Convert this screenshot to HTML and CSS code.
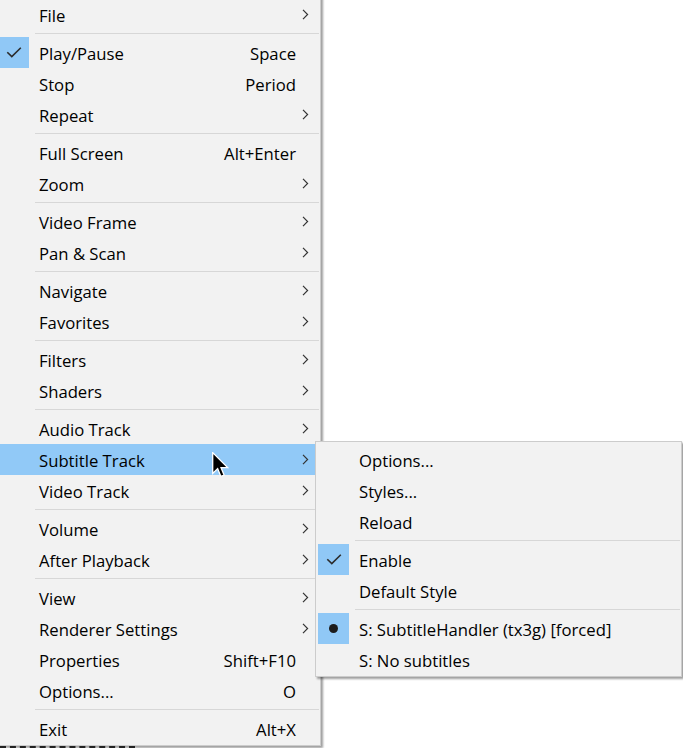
FILE: index.html
```html
<!DOCTYPE html>
<html>
<head>
<meta charset="utf-8">
<link rel="stylesheet" href="styles.css">
</head>
<body>
<div class="screen">
  <div class="menu main">
    <div class="item"><span class="gutter"></span><span class="label">File</span><span class="key"></span><span class="arrow"><svg width="7" height="11" viewBox="0 0 7 11"><polyline points="1,0.8 5.6,5.5 1,10.2"/></svg></span></div>
    <div class="sep"></div>
    <div class="item"><span class="gutter on"><svg class="check" width="16" height="11" viewBox="0 0 16 11"><polyline points="1.3,5.2 5.8,9.6 14.8,0.8"/></svg></span><span class="label">Play/Pause</span><span class="key">Space</span><span class="arrow"></span></div>
    <div class="item"><span class="gutter"></span><span class="label">Stop</span><span class="key">Period</span><span class="arrow"></span></div>
    <div class="item"><span class="gutter"></span><span class="label">Repeat</span><span class="key"></span><span class="arrow"><svg width="7" height="11" viewBox="0 0 7 11"><polyline points="1,0.8 5.6,5.5 1,10.2"/></svg></span></div>
    <div class="sep"></div>
    <div class="item"><span class="gutter"></span><span class="label">Full Screen</span><span class="key">Alt+Enter</span><span class="arrow"></span></div>
    <div class="item"><span class="gutter"></span><span class="label">Zoom</span><span class="key"></span><span class="arrow"><svg width="7" height="11" viewBox="0 0 7 11"><polyline points="1,0.8 5.6,5.5 1,10.2"/></svg></span></div>
    <div class="sep"></div>
    <div class="item"><span class="gutter"></span><span class="label">Video Frame</span><span class="key"></span><span class="arrow"><svg width="7" height="11" viewBox="0 0 7 11"><polyline points="1,0.8 5.6,5.5 1,10.2"/></svg></span></div>
    <div class="item"><span class="gutter"></span><span class="label">Pan &amp; Scan</span><span class="key"></span><span class="arrow"><svg width="7" height="11" viewBox="0 0 7 11"><polyline points="1,0.8 5.6,5.5 1,10.2"/></svg></span></div>
    <div class="sep"></div>
    <div class="item"><span class="gutter"></span><span class="label">Navigate</span><span class="key"></span><span class="arrow"><svg width="7" height="11" viewBox="0 0 7 11"><polyline points="1,0.8 5.6,5.5 1,10.2"/></svg></span></div>
    <div class="item"><span class="gutter"></span><span class="label">Favorites</span><span class="key"></span><span class="arrow"><svg width="7" height="11" viewBox="0 0 7 11"><polyline points="1,0.8 5.6,5.5 1,10.2"/></svg></span></div>
    <div class="sep"></div>
    <div class="item"><span class="gutter"></span><span class="label">Filters</span><span class="key"></span><span class="arrow"><svg width="7" height="11" viewBox="0 0 7 11"><polyline points="1,0.8 5.6,5.5 1,10.2"/></svg></span></div>
    <div class="item"><span class="gutter"></span><span class="label">Shaders</span><span class="key"></span><span class="arrow"><svg width="7" height="11" viewBox="0 0 7 11"><polyline points="1,0.8 5.6,5.5 1,10.2"/></svg></span></div>
    <div class="sep"></div>
    <div class="item"><span class="gutter"></span><span class="label">Audio Track</span><span class="key"></span><span class="arrow"><svg width="7" height="11" viewBox="0 0 7 11"><polyline points="1,0.8 5.6,5.5 1,10.2"/></svg></span></div>
    <div class="item hot"><span class="gutter"></span><span class="label">Subtitle Track</span><span class="key"></span><span class="arrow"><svg width="7" height="11" viewBox="0 0 7 11"><polyline points="1,0.8 5.6,5.5 1,10.2"/></svg></span></div>
    <div class="item"><span class="gutter"></span><span class="label">Video Track</span><span class="key"></span><span class="arrow"><svg width="7" height="11" viewBox="0 0 7 11"><polyline points="1,0.8 5.6,5.5 1,10.2"/></svg></span></div>
    <div class="sep"></div>
    <div class="item"><span class="gutter"></span><span class="label">Volume</span><span class="key"></span><span class="arrow"><svg width="7" height="11" viewBox="0 0 7 11"><polyline points="1,0.8 5.6,5.5 1,10.2"/></svg></span></div>
    <div class="item"><span class="gutter"></span><span class="label">After Playback</span><span class="key"></span><span class="arrow"><svg width="7" height="11" viewBox="0 0 7 11"><polyline points="1,0.8 5.6,5.5 1,10.2"/></svg></span></div>
    <div class="sep"></div>
    <div class="item"><span class="gutter"></span><span class="label">View</span><span class="key"></span><span class="arrow"><svg width="7" height="11" viewBox="0 0 7 11"><polyline points="1,0.8 5.6,5.5 1,10.2"/></svg></span></div>
    <div class="item"><span class="gutter"></span><span class="label">Renderer Settings</span><span class="key"></span><span class="arrow"><svg width="7" height="11" viewBox="0 0 7 11"><polyline points="1,0.8 5.6,5.5 1,10.2"/></svg></span></div>
    <div class="item"><span class="gutter"></span><span class="label">Properties</span><span class="key">Shift+F10</span><span class="arrow"></span></div>
    <div class="item"><span class="gutter"></span><span class="label">Options...</span><span class="key">O</span><span class="arrow"></span></div>
    <div class="sep"></div>
    <div class="item"><span class="gutter"></span><span class="label">Exit</span><span class="key">Alt+X</span><span class="arrow"></span></div>
  </div>
  <div class="taskbits"></div>

  <div class="menu sub">
    <div class="item"><span class="gutter"></span><span class="label">Options...</span></div>
    <div class="item"><span class="gutter"></span><span class="label">Styles...</span></div>
    <div class="item"><span class="gutter"></span><span class="label">Reload</span></div>
    <div class="sep"></div>
    <div class="item"><span class="gutter on"><svg class="check" width="16" height="11" viewBox="0 0 16 11"><polyline points="1.3,5.2 5.8,9.6 14.8,0.8"/></svg></span><span class="label">Enable</span></div>
    <div class="item"><span class="gutter"></span><span class="label">Default Style</span></div>
    <div class="sep"></div>
    <div class="item"><span class="gutter on"><span class="bullet"></span></span><span class="label">S: SubtitleHandler (tx3g) [forced]</span></div>
    <div class="item"><span class="gutter"></span><span class="label">S: No subtitles</span></div>
  </div>

  <svg class="cursor" width="17" height="26" viewBox="0 0 13 20">
    <path d="M0.5 0.5 V16.5 L4.3 12.8 L6.8 18.8 L9.3 17.8 L6.9 12 H12 Z"/>
  </svg>
</div>
</body>
</html>
```

FILE: styles.css
```css
html, body {
  margin: 0;
  padding: 0;
  background: #ffffff;
  overflow: hidden;
}

.screen {
  position: relative;
  width: 683px;
  height: 748px;
  overflow: hidden;
  font-family: "Open Sans", "Noto Sans", "DejaVu Sans", sans-serif;
  font-size: 16.7px;
  color: #000;
}

.menu {
  background: #f2f2f2;
  border: 1px solid #cccccc;
  box-shadow: 2px 2px 2px rgba(0, 0, 0, 0.38);
  padding: 2px 2px 1px 2px;
}

.main {
  width: 320px;
  margin-top: -4px;
  margin-left: -5px;
}

.sub {
  position: absolute;
  left: 315px;
  top: 441px;
  width: 361px;
}

.item {
  display: flex;
  align-items: center;
  height: 31px;
  white-space: nowrap;
}

.item.hot {
  background: #91c9f7;
}

.gutter {
  width: 31px;
  align-self: stretch;
  display: flex;
  align-items: center;
  justify-content: center;
  flex: none;
}

.gutter.on {
  background: #90c8f6;
}

.check polyline {
  fill: none;
  stroke: #2b2b2b;
  stroke-width: 1.6;
}

.bullet {
  width: 9px;
  height: 9px;
  border-radius: 50%;
  background: #1c1c1c;
}

.label {
  margin-left: 10px;
  flex: 1;
  padding-top: 3px;
  line-height: 28px;
}

.key {
  flex: none;
  padding-top: 3px;
  line-height: 28px;
}

.arrow {
  width: 16px;
  padding-left: 6px;
  flex: none;
  display: flex;
  align-items: center;
}

.arrow polyline {
  fill: none;
  stroke: #333333;
  stroke-width: 1.2;
}

.sep {
  height: 7px;
  display: flex;
  align-items: center;
  margin-left: 37px;
  margin-right: -1px;
}

.sep::before {
  content: "";
  display: block;
  width: 100%;
  height: 1px;
  background: #d7d7d7;
}

.taskbits {
  width: 135px;
  height: 0;
  border-top: 2px dashed #222;
}

.cursor {
  position: absolute;
  left: 212px;
  top: 452px;
}

.cursor path {
  fill: #000;
  stroke: #fff;
  stroke-width: 1;
  stroke-linejoin: miter;
}
```
